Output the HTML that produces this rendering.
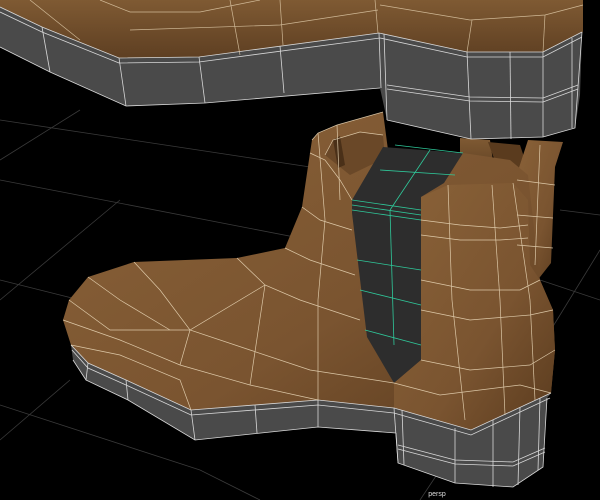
<!DOCTYPE html>
<html><head><meta charset="utf-8"><style>
html,body{margin:0;padding:0;background:#000;width:600px;height:500px;overflow:hidden}
svg{display:block}
</style></head><body>
<svg width="600" height="500" viewBox="0 0 600 500" xmlns="http://www.w3.org/2000/svg">
<defs>
<linearGradient id="br" x1="0" y1="0" x2="1" y2="1">
<stop offset="0" stop-color="#8a6238"/><stop offset="0.6" stop-color="#7a5430"/><stop offset="1" stop-color="#5a3b1e"/>
</linearGradient>
<linearGradient id="br2" x1="0" y1="0" x2="0" y2="1">
<stop offset="0" stop-color="#7f5a33"/><stop offset="1" stop-color="#5e3f22"/>
</linearGradient>
</defs>
<rect width="600" height="500" fill="#000"/>
<g stroke="#3a3a3a" stroke-width="0.8" fill="none">
<line x1="0" y1="120" x2="330" y2="170"/>
<line x1="0" y1="180" x2="310" y2="240"/>
<line x1="0" y1="280" x2="80" y2="300"/>
<line x1="0" y1="160" x2="80" y2="110"/>
<line x1="0" y1="300" x2="120" y2="200"/>
<line x1="0" y1="440" x2="70" y2="380"/>
<line x1="540" y1="280" x2="600" y2="300"/>
<line x1="560" y1="210" x2="600" y2="215"/>
<line x1="520" y1="380" x2="600" y2="250"/>
<line x1="0" y1="405" x2="200" y2="470"/>
<line x1="200" y1="470" x2="260" y2="500"/>
<line x1="420" y1="500" x2="440" y2="470"/>
</g>
<!-- ankle posts -->
<polygon points="460,138 490,140 495,175 460,175" fill="url(#br2)"/>
<polygon points="488,142 520,145 530,175 500,175" fill="#5a3b1e"/>
<!-- back pull tab -->
<polygon points="528,140 563,142 555,167 551,263 540,277 517,265 515,180" fill="url(#br)"/>
<!-- boot body -->
<polygon points="312,140 318,133 337,125 383,112 388,150 463,153 510,160 528,175 540,280 553,310 555,350 551,393 547,398 471,430 394,408 318,400 191,410 126,380 88,363 71,345 63,320 69,300 88,277 134,262 237,258 285,248 302,207 310,153" fill="url(#br)"/>
<!-- collar interior -->
<polygon points="325,155 333,140 360,132 383,135 385,158 350,175" fill="#6a4828"/>
<polygon points="333,140 340,136 345,165 338,168" fill="#4a3018"/>
<!-- elastic gusset -->
<polygon points="352,200 383,147 463,153 444,183 421,197 421,360 394,383 367,337 352,213" fill="#2d2d2d"/>
<g stroke="#2fc89a" stroke-width="0.8" fill="none">
<polyline points="395,145 463,153"/><polyline points="380,170 455,175"/>
<polyline points="352,200 421,210"/><polyline points="352,205 421,215"/><polyline points="352,210 421,220"/>
<polyline points="357,260 421,270"/><polyline points="360,290 421,305"/><polyline points="365,330 421,345"/>
<line x1="430" y1="150" x2="390" y2="210"/><line x1="390" y1="210" x2="394" y2="345"/>
</g>
<!-- right shaft front panel -->
<polygon points="421,197 448,185 513,183 528,200 530,265 540,280 553,310 555,350 551,393 471,430 394,408 394,383 421,360" fill="url(#br)"/>
<!-- lower sole -->
<polygon points="71,345 88,363 126,380 191,410 318,400 394,408 471,430 551,393 547,398 543,467 513,487 455,483 398,463 396,433 318,427 195,440 128,400 86,380 73,360" fill="#4a4a4a"/>
<g stroke="#d8d8d8" stroke-width="0.8" fill="none">
<polyline points="71,345 88,363 126,380 191,410 318,400 394,408 471,430 551,393"/>
<polyline points="72,350 88,368 126,385 191,415 318,405 394,413 471,435 550,398"/>
<polyline points="73,360 86,380 128,400 195,440 318,427 396,433"/>
<polyline points="398,445 455,460 513,462 545,448"/><polyline points="398,449 455,464 513,466 545,452"/>
<polyline points="396,433 398,463 455,483 513,487 543,467 547,398"/>
<line x1="88" y1="363" x2="86" y2="380"/><line x1="126" y1="380" x2="128" y2="400"/>
<line x1="191" y1="410" x2="195" y2="440"/><line x1="255" y1="405" x2="257" y2="433"/>
<line x1="318" y1="400" x2="318" y2="427"/><line x1="394" y1="408" x2="398" y2="463"/>
<line x1="402" y1="410" x2="404" y2="465"/><line x1="455" y1="428" x2="455" y2="483"/>
<line x1="493" y1="420" x2="493" y2="487"/><line x1="520" y1="407" x2="518" y2="485"/>
<line x1="540" y1="398" x2="538" y2="470"/>
</g>
<g stroke="#eedcbc" stroke-width="0.7" fill="none" opacity="0.85">
<polyline points="312,140 318,133 337,125 383,112"/>
<polyline points="325,155 333,140 360,132 383,135"/>
<polyline points="310,153 325,160 340,180 352,200"/>
<polyline points="302,207 320,220 352,230"/>
<polyline points="285,248 310,260 355,275"/>
<polyline points="237,258 265,285 300,300 360,320"/>
<polyline points="134,262 160,290 190,330 250,350 310,370 394,383"/>
<polyline points="88,277 120,300 170,330"/>
<polyline points="69,300 110,330 190,330 265,285"/>
<polyline points="63,320 120,340 180,365 250,385 318,400"/>
<polyline points="71,345 120,355 180,380 191,410"/>
<line x1="318" y1="133" x2="325" y2="220"/><line x1="325" y1="220" x2="318" y2="300"/>
<line x1="318" y1="300" x2="318" y2="400"/>
<line x1="265" y1="285" x2="250" y2="385"/>
<line x1="190" y1="330" x2="180" y2="365"/>
<line x1="337" y1="125" x2="340" y2="200"/>
<line x1="448" y1="185" x2="452" y2="300"/><line x1="452" y1="300" x2="465" y2="420"/>
<line x1="492" y1="185" x2="500" y2="300"/><line x1="500" y1="300" x2="505" y2="415"/>
<line x1="513" y1="183" x2="530" y2="300"/><line x1="530" y1="300" x2="535" y2="400"/>
<polyline points="421,220 460,225 500,228 528,225"/>
<polyline points="421,235 460,240 500,240 528,238"/>
<polyline points="421,280 470,290 520,290 540,280"/>
<polyline points="421,310 470,320 530,315 553,310"/>
<polyline points="421,360 470,370 530,365 555,350"/>
<polyline points="394,383 440,395 520,385 551,393"/>
<line x1="540" y1="145" x2="535" y2="265"/><polyline points="517,180 555,185"/>
<polyline points="517,215 553,218"/><polyline points="517,245 553,248"/>
</g>
<!-- top boot brown -->
<polygon points="0,0 583,0 583,32 543,52 467,52 379,33 199,57 119,58 42,27 0,7" fill="url(#br2)"/>
<!-- top sole -->
<polygon points="0,7 42,27 119,58 199,57 379,33 467,52 543,52 582,32 580,95 575,128 543,137 471,139 387,120 380,88 205,103 126,106 50,72 0,47" fill="#4a4a4a"/>
<g stroke="#d8d8d8" stroke-width="0.8" fill="none">
<polyline points="0,7 42,27 119,58 199,57 379,33 467,52 543,52 582,32"/>
<polyline points="0,12 42,32 119,63 199,62 380,38 467,57 543,57 582,37"/>
<polyline points="0,47 50,72 126,106 205,103 380,88"/>
<polyline points="387,85 470,97 543,98 578,85"/>
<polyline points="387,89 470,101 543,102 578,89"/>
<polyline points="387,120 471,139 543,137 575,128 582,32"/>
<line x1="42" y1="27" x2="50" y2="72"/><line x1="119" y1="58" x2="126" y2="106"/>
<line x1="199" y1="57" x2="205" y2="103"/><line x1="280" y1="46" x2="284" y2="93"/>
<line x1="379" y1="33" x2="381" y2="88"/><line x1="384" y1="34" x2="387" y2="120"/>
<line x1="467" y1="52" x2="471" y2="139"/><line x1="510" y1="52" x2="511" y2="139"/>
<line x1="543" y1="52" x2="543" y2="137"/><line x1="572" y1="38" x2="572" y2="128"/>
</g>
<g stroke="#e6d2b0" stroke-width="0.7" fill="none" opacity="0.8">
<polyline points="100,0 130,12 200,12 260,0"/>
<line x1="30" y1="0" x2="80" y2="40"/><line x1="230" y1="0" x2="240" y2="55"/>
<line x1="280" y1="0" x2="283" y2="45"/><line x1="375" y1="0" x2="378" y2="33"/>
<line x1="472" y1="20" x2="467" y2="52"/><line x1="545" y1="15" x2="543" y2="52"/>
<polyline points="380,5 470,20 545,15 583,5"/>
<polyline points="130,30 280,25 378,10"/>
</g>
<text x="437" y="496" fill="#ddd" font-family="Liberation Sans, sans-serif" font-size="7" text-anchor="middle">persp</text>
</svg>
</body></html>
